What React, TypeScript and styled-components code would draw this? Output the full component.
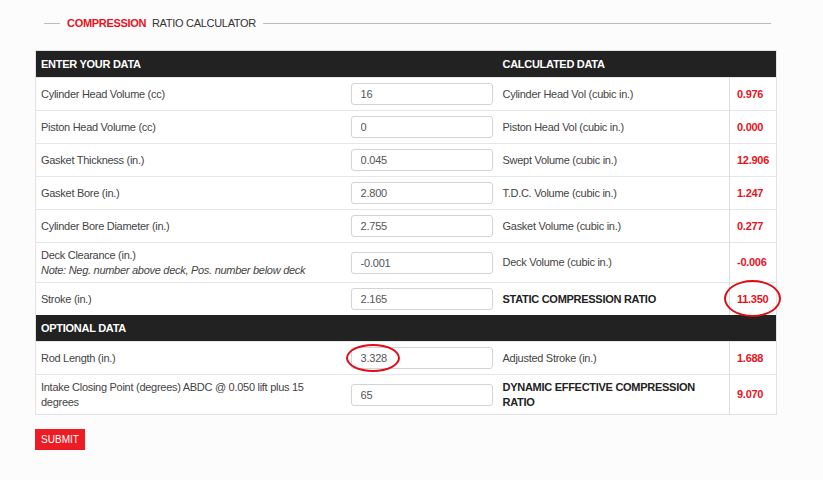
import styled, { createGlobalStyle } from "styled-components";

const GlobalStyle = createGlobalStyle`
  html, body {
    margin: 0;
    padding: 0;
    background: #fcfcfc;
    font-family: "Liberation Sans", Arial, sans-serif;
    color: #444;
  }
`;

const Page = styled.div`
  width: 823px;
  height: 480px;
  box-sizing: border-box;
  padding: 14px 47px 0 35px;
`;

const TitleBar = styled.div`
  display: flex;
  align-items: center;
  gap: 7px;
  padding-left: 9px;
  height: 18px;
  margin-bottom: 18px;
  font-size: 11px;
  letter-spacing: -0.3px;
  color: #333;
`;

const Rule = styled.span<{ $grow?: boolean }>`
  display: block;
  height: 1px;
  background: #bbb;
  width: 16px;
  ${(p) => (p.$grow ? "flex: 1; margin-right: 5px;" : "")}
`;

const TitleRed = styled.span`
  color: #e8121c;
  font-weight: bold;
  margin-right: 3px;
`;

const Table = styled.table`
  width: 741px;
  border-collapse: collapse;
  table-layout: fixed;
  font-size: 11px;
  letter-spacing: -0.28px;
  background: #fff;
  border: 1px solid #e2e2e2;
`;

const HeadCell = styled.th`
  background: #222;
  color: #fff;
  font-weight: bold;
  text-align: left;
  height: 26px;
  padding: 0 5px;
`;

const Row = styled.tr`
  border-top: 1px solid #e6e6e6;
`;

const Cell = styled.td<{ $value?: boolean; $bold?: boolean }>`
  padding: 0 5px;
  height: 32px;
  vertical-align: middle;
  line-height: 15px;
  position: relative;
  color: ${(p) => (p.$value ? "#e8121c" : p.$bold ? "#222" : "#444")};
  font-weight: ${(p) => (p.$value || p.$bold ? "bold" : "normal")};
  ${(p) => (p.$value ? "border-left: 1px solid #ddd; padding-left: 7px;" : "")}
`;

const Note = styled.div`
  font-style: italic;
`;

const Input = styled.input`
  display: block;
  width: 142px;
  height: 22px;
  box-sizing: border-box;
  border: 1px solid #d4d4d4;
  border-radius: 3px;
  padding: 0 9px;
  font-family: "Liberation Sans", Arial, sans-serif;
  font-size: 11px;
  letter-spacing: -0.2px;
  color: #555;
  background: #fff;
`;

const Circle = styled.span<{ $w: number; $h: number; $l: number; $t: number }>`
  position: absolute;
  left: ${(p) => p.$l}px;
  top: ${(p) => p.$t}px;
  width: ${(p) => p.$w}px;
  height: ${(p) => p.$h}px;
  border: 2px solid #e00d18;
  border-radius: 50%;
  box-sizing: border-box;
  pointer-events: none;
`;

const Submit = styled.button`
  display: block;
  margin-top: 14px;
  width: 50px;
  height: 21px;
  border: none;
  background: #ed1c24;
  color: #fff;
  font-family: "Liberation Sans", Arial, sans-serif;
  font-size: 10px;
  padding: 0;
`;

type Line = {
  label: string;
  note?: string;
  input: string;
  calc: string;
  calcBold?: boolean;
  value: string;
  tall?: boolean;
  circleValue?: boolean;
  circleInput?: boolean;
};

const main: Line[] = [
  { label: "Cylinder Head Volume (cc)", input: "16", calc: "Cylinder Head Vol (cubic in.)", value: "0.976" },
  { label: "Piston Head Volume (cc)", input: "0", calc: "Piston Head Vol (cubic in.)", value: "0.000" },
  { label: "Gasket Thickness (in.)", input: "0.045", calc: "Swept Volume (cubic in.)", value: "12.906" },
  { label: "Gasket Bore (in.)", input: "2.800", calc: "T.D.C. Volume (cubic in.)", value: "1.247" },
  { label: "Cylinder Bore Diameter (in.)", input: "2.755", calc: "Gasket Volume (cubic in.)", value: "0.277" },
  {
    label: "Deck Clearance (in.)",
    note: "Note: Neg. number above deck, Pos. number below deck",
    input: "-0.001",
    calc: "Deck Volume (cubic in.)",
    value: "-0.006",
    tall: true,
  },
  { label: "Stroke (in.)", input: "2.165", calc: "STATIC COMPRESSION RATIO", calcBold: true, value: "11.350", circleValue: true },
];

const optional: Line[] = [
  { label: "Rod Length (in.)", input: "3.328", calc: "Adjusted Stroke (in.)", value: "1.688", circleInput: true },
  {
    label: "Intake Closing Point (degrees) ABDC @ 0.050 lift plus 15 degrees",
    input: "65",
    calc: "DYNAMIC EFFECTIVE COMPRESSION RATIO",
    calcBold: true,
    value: "9.070",
    tall: true,
  },
];

function DataRow({ line }: { line: Line }) {
  const h = line.tall ? 39 : 32;
  return (
    <Row>
      <Cell style={{ height: h }}>
        {line.label}
        {line.note && <Note>{line.note}</Note>}
      </Cell>
      <Cell>
        <Input defaultValue={line.input} />
        {line.circleInput && <Circle $l={0} $t={2} $w={54} $h={28} />}
      </Cell>
      <Cell $bold={line.calcBold}>{line.calc}</Cell>
      <Cell $value>
        {line.value}
        {line.circleValue && <Circle $l={-6} $t={-3} $w={57} $h={37} />}
      </Cell>
    </Row>
  );
}

export default function App() {
  return (
    <>
      <GlobalStyle />
      <Page>
        <TitleBar>
          <Rule />
          <span>
            <TitleRed>COMPRESSION</TitleRed> RATIO CALCULATOR
          </span>
          <Rule $grow />
        </TitleBar>

        <Table>
          <colgroup>
            <col style={{ width: 310 }} />
            <col style={{ width: 152 }} />
            <col style={{ width: 232 }} />
            <col style={{ width: 47 }} />
          </colgroup>
          <tbody>
            <tr>
              <HeadCell colSpan={2}>ENTER YOUR DATA</HeadCell>
              <HeadCell colSpan={2}>CALCULATED DATA</HeadCell>
            </tr>
            {main.map((l) => (
              <DataRow key={l.label} line={l} />
            ))}
            <tr>
              <HeadCell colSpan={4}>OPTIONAL DATA</HeadCell>
            </tr>
            {optional.map((l) => (
              <DataRow key={l.label} line={l} />
            ))}
          </tbody>
        </Table>

        <Submit>SUBMIT</Submit>
      </Page>
    </>
  );
}
